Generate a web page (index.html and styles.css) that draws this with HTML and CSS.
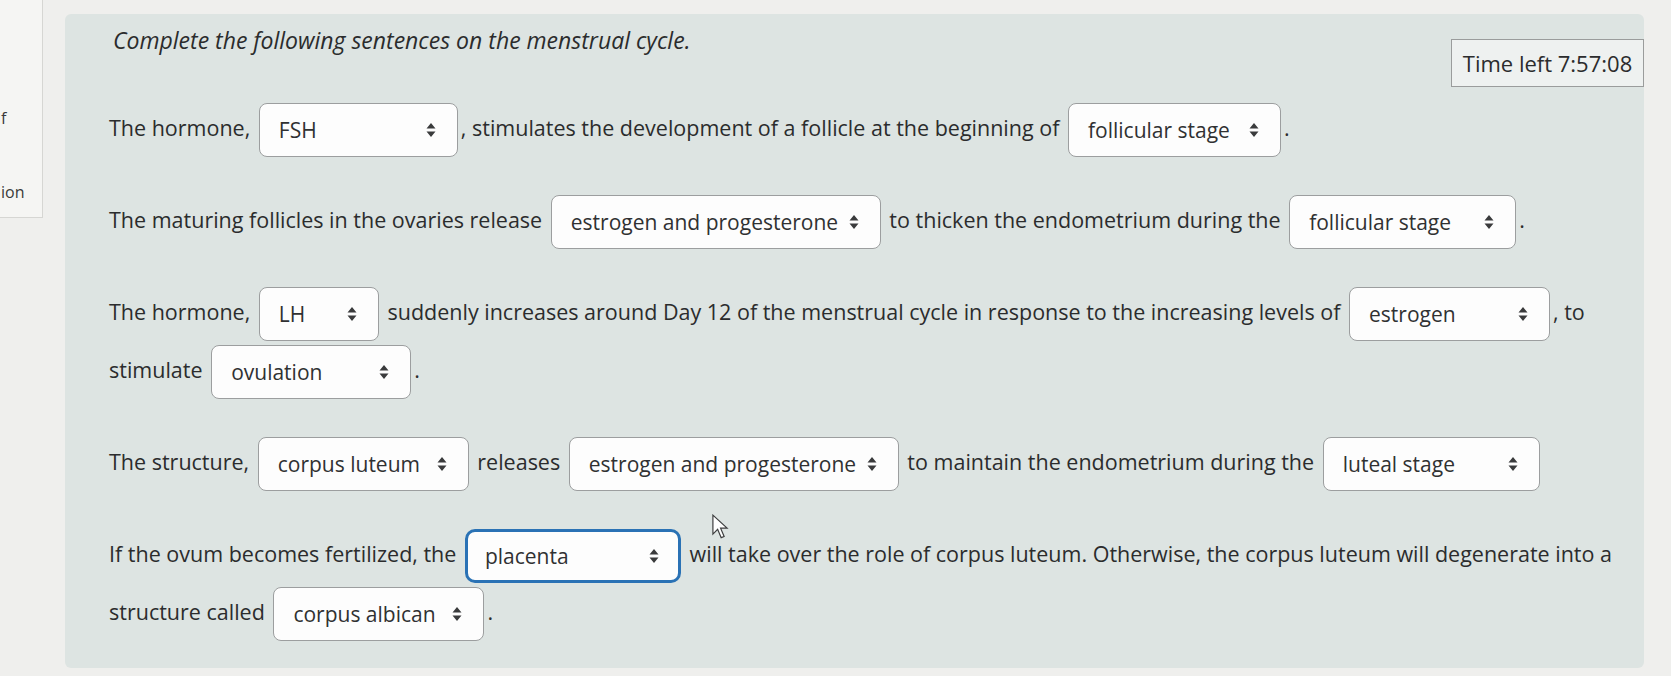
FILE: index.html
```html
<!DOCTYPE html>
<html lang="en">
<head>
<meta charset="utf-8">
<title>Menstrual cycle</title>
<link rel="stylesheet" href="styles.css">
</head>
<body>
<div class="page">
  <aside class="sidebar">
    <span class="side-item side-f">f</span>
    <span class="side-item side-ion">ion</span>
  </aside>
  <div class="gutter"></div>
  <main class="panel">
    <div class="header">
      <h1 class="title">Complete the following sentences on the menstrual cycle.</h1>
      <div class="timer">Time left 7:57:08</div>
    </div>

    <p class="q">The hormone, <span class="sel w-fsh"><span class="val">FSH</span><svg class="arr" viewBox="0 0 10 16"><path d="M5 1 L9.5 6.5 H0.5 Z M5 15 L9.5 9.5 H0.5 Z"/></svg></span>, stimulates the development of a follicle at the beginning of <span class="sel w-fol1"><span class="val">follicular stage</span><svg class="arr" viewBox="0 0 10 16"><path d="M5 1 L9.5 6.5 H0.5 Z M5 15 L9.5 9.5 H0.5 Z"/></svg></span>.</p>

    <p class="q">The maturing follicles in the ovaries release <span class="sel w-ep"><span class="val">estrogen and progesterone</span><svg class="arr" viewBox="0 0 10 16"><path d="M5 1 L9.5 6.5 H0.5 Z M5 15 L9.5 9.5 H0.5 Z"/></svg></span> to thicken the endometrium during the <span class="sel w-fol2"><span class="val">follicular stage</span><svg class="arr" viewBox="0 0 10 16"><path d="M5 1 L9.5 6.5 H0.5 Z M5 15 L9.5 9.5 H0.5 Z"/></svg></span>.</p>

    <p class="q"><span>The hormone,</span> <span class="sel w-lh"><span class="val">LH</span><svg class="arr" viewBox="0 0 10 16"><path d="M5 1 L9.5 6.5 H0.5 Z M5 15 L9.5 9.5 H0.5 Z"/></svg></span> <span>suddenly increases around Day 12 of the menstrual cycle in response to the increasing levels of</span> <span class="sel w-est"><span class="val">estrogen</span><svg class="arr" viewBox="0 0 10 16"><path d="M5 1 L9.5 6.5 H0.5 Z M5 15 L9.5 9.5 H0.5 Z"/></svg></span><span>, to</span> <span>stimulate</span> <span class="sel w-ovu"><span class="val">ovulation</span><svg class="arr" viewBox="0 0 10 16"><path d="M5 1 L9.5 6.5 H0.5 Z M5 15 L9.5 9.5 H0.5 Z"/></svg></span>.</p>

    <p class="q">The structure, <span class="sel w-cl"><span class="val">corpus luteum</span><svg class="arr" viewBox="0 0 10 16"><path d="M5 1 L9.5 6.5 H0.5 Z M5 15 L9.5 9.5 H0.5 Z"/></svg></span> releases <span class="sel w-ep"><span class="val">estrogen and progesterone</span><svg class="arr" viewBox="0 0 10 16"><path d="M5 1 L9.5 6.5 H0.5 Z M5 15 L9.5 9.5 H0.5 Z"/></svg></span> to maintain the endometrium during the <span class="sel w-lut"><span class="val">luteal stage</span><svg class="arr" viewBox="0 0 10 16"><path d="M5 1 L9.5 6.5 H0.5 Z M5 15 L9.5 9.5 H0.5 Z"/></svg></span></p>

    <p class="q"><span>If the ovum becomes fertilized, the</span> <span class="sel w-pla focus"><span class="val">placenta</span><svg class="arr" viewBox="0 0 10 16"><path d="M5 1 L9.5 6.5 H0.5 Z M5 15 L9.5 9.5 H0.5 Z"/></svg></span> <span>will take over the role of corpus luteum. Otherwise, the corpus luteum will degenerate into a</span> <span>structure called</span> <span class="sel w-ca"><span class="val">corpus albican</span><svg class="arr" viewBox="0 0 10 16"><path d="M5 1 L9.5 6.5 H0.5 Z M5 15 L9.5 9.5 H0.5 Z"/></svg></span>.</p>

    <svg class="cursor" viewBox="0 0 14 22"><path d="M1 1 L1 17 L5 13 L8 20 L10.5 19 L7.5 12 L13 12 Z"/></svg>
  </main>
</div>
</body>
</html>
```

FILE: styles.css
```css
html, body {
  margin: 0;
  padding: 0;
}
body {
  background: #efefed;
  font-family: "Open Sans", "Noto Sans", sans-serif;
  color: #2b2c2d;
  width: 1671px;
  height: 676px;
  overflow: hidden;
}
.page {
  display: flex;
  align-items: flex-start;
  height: 676px;
}
.sidebar {
  width: 43px;
  height: 218px;
  flex: none;
  background: #f5f5f3;
  border-right: 1px solid #d6d6d3;
  border-bottom: 1px solid #d6d6d3;
  font-size: 16px;
  color: #3a3a3a;
  display: flex;
  flex-direction: column;
  padding-top: 108px;
  box-sizing: border-box;
  overflow: hidden;
}
.side-item {
  display: block;
  margin-left: 1px;
  line-height: 20px;
}
.side-ion {
  margin-top: 54px;
}
.gutter {
  width: 22px;
  flex: none;
}
.panel {
  position: relative;
  width: 1579px;
  height: 654px;
  margin-top: 14px;
  background: #dde4e2;
  border-radius: 6px;
  padding: 0 28px 0 44px;
  box-sizing: border-box;
  flex: none;
}
.header {
  display: flex;
  justify-content: space-between;
  align-items: flex-start;
  padding-top: 11px;
  margin-right: -28px;
}
.title {
  margin: 0 0 0 4px;
  font-size: 23px;
  font-style: italic;
  font-weight: 400;
  line-height: 30px;
}
.timer {
  margin-top: 14px;
  width: 193px;
  height: 48px;
  box-sizing: border-box;
  border: 1px solid #9a9c9c;
  background: #eef1f0;
  font-size: 22px;
  line-height: 46px;
  text-align: center;
}
.q {
  margin: 0 0 34px;
  font-size: 21.5px;
  line-height: 30px;
}
.header + .q {
  margin-top: 14px;
}
.sel {
  display: inline-flex;
  align-items: center;
  height: 54px;
  box-sizing: border-box;
  vertical-align: middle;
  background: #fdfdfd;
  border: 1px solid #9c9e9f;
  border-radius: 8px;
  padding: 0 21px 0 19px;
  margin: 2px 3px;
  line-height: 1;
  font-size: 21px;
  color: #303132;
}
.sel .val {
  flex: 1;
  white-space: nowrap;
}
.sel .arr {
  width: 10px;
  height: 16px;
  fill: #3a3b3c;
  flex: none;
  margin-left: 8px;
}
.sel.focus {
  border: 3px solid #2a72b5;
  border-radius: 10px;
  padding-left: 17px;
  padding-right: 19px;
}
.w-fsh { width: 199px; }
.w-fol1 { width: 213px; }
.w-ep { width: 330px; }
.w-fol2 { width: 227px; }
.w-lh { width: 120px; }
.w-est { width: 201px; }
.w-ovu { width: 200px; }
.w-cl { width: 211px; }
.w-lut { width: 217px; }
.w-pla { width: 216px; }
.w-ca { width: 211px; }
.cursor {
  position: absolute;
  left: 646px;
  top: 500px;
  width: 18px;
  height: 26px;
  fill: #ffffff;
  stroke: #3c3d3e;
  stroke-width: 1;
}
```
